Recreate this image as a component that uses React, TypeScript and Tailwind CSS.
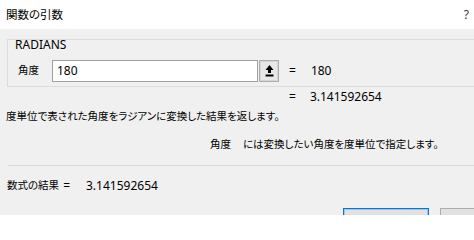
import React from "react";

function UploadIcon() {
  return (
    <svg width="9" height="12" viewBox="0 0 9 12" fill="#000">
      <polygon points="4.5,0 0.5,5 3,5 3,8 6,8 6,5 8.5,5" />
      <rect x="0.5" y="9.5" width="8" height="2" />
    </svg>
  );
}

export default function App() {
  return (
    <div className="w-[474px] h-[215px] overflow-hidden bg-[#f0f0f0] flex flex-col text-black font-['Noto_Sans','Noto_Sans_CJK_JP',sans-serif] [font-feature-settings:'palt']">
      <div className="h-[29px] shrink-0 bg-white flex items-center justify-between pl-[6px] pr-[5px]">
        <span className="text-[11.5px] leading-none">関数の引数</span>
        <span className="text-[12px] leading-none text-[#333]">?</span>
      </div>
      <div className="flex flex-col pl-[6px] shrink-0">
        <div className="mt-[10px] ml-[1px] w-[480px] h-[48px] shrink-0 border border-[#dcdcdc] flex flex-col">
          <div className="pl-[7px] h-[10px] leading-[10px] text-[12px]">RADIANS</div>
          <div className="mt-[10px] h-[22px] flex items-center">
            <span className="w-[44px] pl-[10px] text-[10.5px]">角度</span>
            <div className="w-[206px] h-[22px] border border-[#a0a0a0] bg-white flex items-center pl-[4px] text-[12px]">
              180
            </div>
            <div className="ml-[1px] w-[20px] h-[22px] border border-[#adadad] bg-[#e8e8e8] shadow-[inset_0_0_0_1px_#d6d6d6] flex items-center justify-center">
              <UploadIcon />
            </div>
            <span className="ml-[10px] text-[12px]">=</span>
            <span className="ml-[15px] text-[12px]">180</span>
          </div>
        </div>
        <div className="h-[20px] flex items-center pl-[283px] text-[12px]">
          <span>=</span>
          <span className="ml-[14px]">3.141592654</span>
        </div>
        <div className="h-[18px] leading-[18px] text-[10.5px] whitespace-nowrap">
          度単位で表された角度をラジアンに変換した結果を返します。
        </div>
        <div className="mt-[11px] h-[18px] flex items-center pl-[204px] text-[10.5px] whitespace-nowrap">
          <span className="w-[33px]">角度</span>
          <span>には変換したい角度を度単位で指定します。</span>
        </div>
        <div className="mt-[11px] ml-[2px] h-px bg-[#dcdcdc]" />
        <div className="mt-[11px] h-[18px] flex items-center pl-[1px] whitespace-nowrap">
          <div className="w-[79px] flex items-center">
            <span className="text-[10.5px]">数式の結果</span>
            <span className="ml-[4px] text-[12px]">=</span>
          </div>
          <span className="text-[12px]">3.141592654</span>
        </div>
        <div className="mt-[13px] flex pl-[337px] gap-[11px]">
          <div className="w-[86px] h-[23px] shrink-0 border border-[#0078d7] bg-[#e1e1e1] shadow-[inset_0_0_0_1px_#9dc7ec]" />
          <div className="w-[86px] h-[23px] shrink-0 border border-[#adadad] bg-[#e1e1e1]" />
        </div>
      </div>
    </div>
  );
}
